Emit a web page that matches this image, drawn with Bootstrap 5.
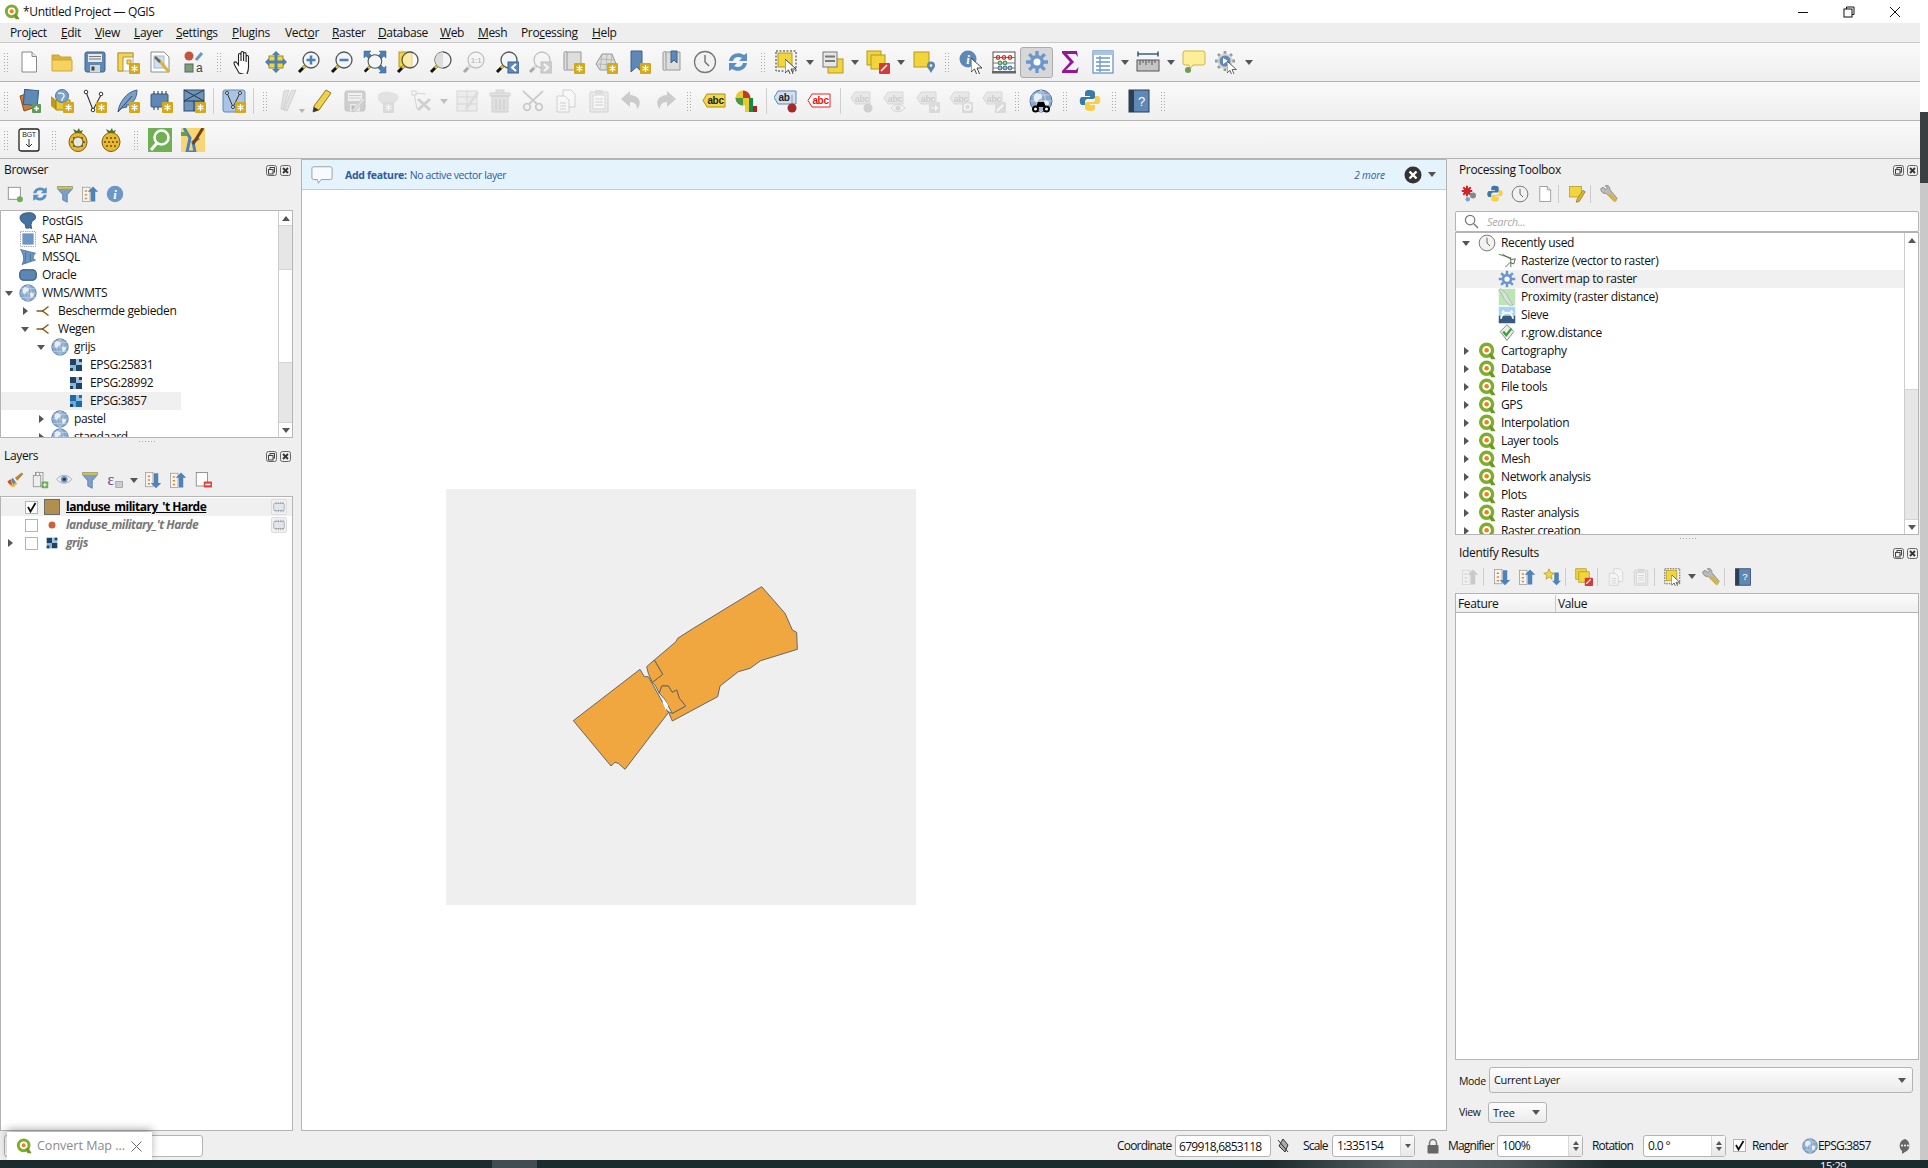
<!DOCTYPE html>
<html lang="en">
<head>
<meta charset="utf-8">
<title>QGIS</title>
<link href="https://cdn.jsdelivr.net/npm/bootstrap@5.3.0/dist/css/bootstrap.min.css" rel="stylesheet">
<style>
html,body{height:100%;margin:0;overflow:hidden}
body{width:1928px;height:1168px;background:#efefef;font-family:"Open Sans","Noto Sans",sans-serif;font-size:12px;line-height:18px;color:#111;letter-spacing:-.35px}
.appwin{height:1160px}
.mainw{width:1920px}
.edgebar{width:8px;background:#c9c9c9}
.edge-top{height:112px;background:#fff}
.edge-thumb{height:71px;background:#3b3f42}
.taskb{height:8px;background:#1c2b2e;color:#fff;font-size:11px;overflow:hidden}
.task-glow{width:45px;margin-left:492px;background:#414d52}
.task-grad{width:340px;margin-left:733px;background:linear-gradient(90deg,#1c2b2e,#5a6265 40%,#4b5558 70%,#1c2b2e)}
.task-time{margin-left:210px;margin-top:-1px;line-height:14px;width:60px}
.titlebar{height:23px;background:#fff;padding-left:4px;padding-right:2px}
.titlebar svg.ic{width:16px;height:16px;margin-right:3px}
.wctl{width:46px;height:23px}
.wctl svg{width:12px;height:12px}
.menubar{height:20px;background:#eee;border-bottom:1px solid #c9c9c9;padding-left:10px}
.menubar span{display:inline-block}
.menubar u{text-decoration:underline}
.mi1{width:51px}.mi2{width:34px}.mi3{width:39px}.mi4{width:42px}.mi5{width:56px}.mi6{width:53px}.mi7{width:47px}.mi8{width:46px}.mi9{width:62px}.mi10{width:38px}.mi11{width:43px}.mi12{width:71px}
.tb{height:39px;background:linear-gradient(#f9f9f9,#efefef);border-bottom:1px solid #b4b4b4}
.tb.tb3{height:38px}
.ti{width:33px;height:31px;flex:none;position:relative}
.ti svg{width:24px;height:24px}
.ti.on{background:#d7d7d7;border:1px solid #acacac;border-radius:3px}
.da{width:12.5px;height:31px;flex:none}
.tri{width:0;height:0;border-left:4px solid transparent;border-right:4px solid transparent;border-top:5px solid #555;flex:none}
.mini{position:absolute;right:1px;bottom:4px;border-left-width:3px;border-right-width:3px;border-top-width:4px;opacity:.4}
.gr{flex:none;width:16px;height:24px}
.gr.g0{width:12.5px}
.gr.nr{width:14px}
.gr::after{content:"";display:block;width:6px;height:20px;background-image:radial-gradient(#aaa .8px,transparent 1px);background-size:3px 3px}
.sp{flex:none;width:6.5px;height:26px}
.sp.wd{width:9.5px}
.sp::after{content:"";display:block;width:1px;height:100%;background:#cfcfcf}
.dis{opacity:.32;filter:grayscale(1)}
.body-row{height:972px}
.dockl{width:293px}
.gutter{width:8px;flex:none}
.mapcol{width:1146px;border:1px solid #b4b4b4;background:#fff}
.dockr{width:465px}
.docktitle{height:22px;padding-left:4px;padding-right:2px}
.dockbtns svg{width:11px;height:11px;margin-left:3px;display:block}
.pbar{height:29px;padding-left:2.5px;padding-bottom:3px}
.pbar2{height:28px;padding-bottom:3px}
.pi{width:25px;height:24px;flex:none}
.pi svg{width:18px;height:18px}
.pda{width:13px;height:24px;flex:none}
.ps{flex:none;width:7px;height:18px}
.ps::after{content:"";display:block;width:1px;height:100%;background:#ccc}
.treebox{background:#fff;border:1px solid #b4b4b4;overflow:hidden}
.tb-browser{height:228px}
.tb-layers{height:634px;padding-top:1px}
.tb-proc{height:303px}
.tlist{overflow:hidden;padding-top:1px}
.trow{height:18px;flex:none;white-space:nowrap}
.l0{padding-left:2px}.l1{padding-left:18px}.l2{padding-left:34px}.l3{padding-left:50px}
.arrw{width:12px;margin-right:4px;flex:none;display:flex;justify-content:center}
.ac{width:0;height:0;border-top:4px solid transparent;border-bottom:4px solid transparent;border-left:5px solid #555}
.ae{width:0;height:0;border-left:4px solid transparent;border-right:4px solid transparent;border-top:5px solid #555}
.ticon{width:18px;height:18px;margin-right:5px;flex:none}
.sel1{background:#f0f0f0;width:180px}
.sel2{background:#f0f0f0}
.tp .arrw{margin-right:6px}
.tp .p0{padding-left:4px}.tp .p1{padding-left:24px}
.tl .trow{padding-left:3px}
.tl .arrw{margin-right:9px}
.cbx{width:13px;height:13px;border:1px solid #b4b4b4;background:#fff;margin-right:6px;flex:none;display:flex}
.cbx svg{width:11px;height:11px}
.lic{width:16px;height:16px;margin-right:6px;flex:none}
.swatch{background:#b0904f;border:1px solid #6c6c6c}
.lyr-on{font-weight:700;text-decoration:underline;color:#000;letter-spacing:-.5px}
.lyr-off{font-weight:700;font-style:italic;color:#777;letter-spacing:-.5px}
.ind{width:16px;height:16px;margin-right:5px;background:#f1f1f1;border:1px solid #ddd;border-radius:2px}
.ind svg{width:14px;height:14px;display:block}
.sbar{width:14px;flex:none;border-left:1px solid #ccc;background:#fff}
.sbbtn{height:14px;flex:none}
.uptri{border-top:0;border-bottom:5px solid #555}
.sgrey{background:#e6e6e6;border-top:1px solid #d4d4d4;border-bottom:1px solid #d4d4d4}
.h45{height:45px}.h92{height:92px}.h142{height:142px}
.split{height:7px;flex:none}
.split::after{content:"";display:block;width:18px;height:3px;background-image:radial-gradient(#aaa .8px,transparent 1px);background-size:3px 3px}
.searchbox{height:21px;margin:1px 1px 0 0;border:1px solid #b4b4b4;border-radius:2px;background:#fff;padding-left:8px;font-style:italic;color:#aaa;font-size:11px}
.searchbox svg{width:15px;height:15px;margin-right:8px}
.tb-proc,.idtab{margin-right:1px}
.idtab{height:467px;background:#fff;border:1px solid #b4b4b4;margin-top:1px}
.idhead{height:19px;background:linear-gradient(#fbfbfb,#efefef);border-bottom:1px solid #b4b4b4;flex:none;padding-top:1px}
.idh1{width:100px;padding-left:2px;border-right:1px solid #c8c8c8;height:100%}
.idh2{padding-left:2px}
.formrow{padding-left:4px}
.fl{width:30px;flex:none;font-size:10.5px}
.combo{height:26px;border:1px solid #b4b4b4;border-radius:3px;background:linear-gradient(#fdfdfd,#ebebeb);padding:0 6px 0 4px;font-size:11px;flex:none}
.c-mode{width:424px;margin-top:7px}
.c-view{width:59px;height:21px;margin-top:9px;margin-left:-1px}
.statusb{height:29px;padding-top:4px;padding-right:7px;position:relative}
.loc{width:199px;height:22px;margin-left:4px;border:1px solid #b4b4b4;border-radius:3px;background:#fff}
.slb{line-height:22px;white-space:nowrap;letter-spacing:-.8px;flex:none}
.sinput{height:22px;padding:0 3px;font-size:12px;line-height:20px;border:1px solid #b4b4b4;border-radius:3px;box-shadow:none;background:#fff;letter-spacing:-.7px;color:#111;min-height:0;flex:none}
.w96{width:96px}
.sgroup{height:22px;border:1px solid #b4b4b4;border-radius:3px;background:#fff;flex:none;letter-spacing:-.6px}
.sgroup span.val{padding-left:4px}
.w83{width:83px}.w86{width:86px}
.scap{width:14px;height:100%;border-left:1px solid #d8d8d8;background:linear-gradient(#fafafa,#e8e8e8);flex:none}
.scap .tri{border-top-width:4px;border-left-width:3px;border-right-width:3px}
.scap .uptri{border-top:0;border-bottom:4px solid #555;margin-bottom:2px}
.st-ico{width:16px;height:16px;flex:none;margin-top:3px}
.lab-coord{width:54px;margin-left:auto}
.lab-scale{width:25px;margin-left:12px}
.lab-mag{width:45px;margin-left:8px}
.lab-rot{width:42px;margin-left:9px}
.lab-ren{width:35px}
.lab-eps{width:57px}
.g4{margin-left:4px}.g9{margin-left:9px}.g7{margin-left:7px}.g11{margin-left:11px}.g15{margin-left:15px}.g22{margin-left:22px}
.cbx.st{margin-top:4px}
.lock{width:14px}
.popup{position:absolute;left:7px;top:1px;width:145px;height:28px;background:#fff;box-shadow:0 -3px 8px rgba(0,0,0,.3);color:#8a8a8a;padding-left:9px;font-size:12.5px;letter-spacing:0}
.popup svg.q{width:16px;height:16px;margin-right:5px}
.popup svg.x{width:11px;height:11px;margin-left:auto;margin-right:10px}
.msgbar{height:30px;background:#e5f3fc;border-bottom:1px solid #b9d0e6;padding-left:9px;padding-right:10px;font-size:10.5px;color:#2d5aa5;flex:none;letter-spacing:-.4px}
.msgbar svg.bub{width:22px;height:22px;margin-right:12px}
.msgbar b{margin-right:3px;letter-spacing:-.3px}
.msgmore{font-style:italic;margin-left:auto;margin-right:19px;font-size:10px;letter-spacing:-.1px}
.msgx{width:18px;height:18px;margin-right:6px}
.canvas{position:relative;flex:1}
.maprect{position:absolute;left:144px;top:299px;width:470px;height:416px;background:#efefef}
.mapshape{position:absolute;left:94px;top:81px;width:280px;height:210px}
svg{overflow:visible}
</style>
</head>
<body class="d-flex flex-column">
<svg width="0" height="0" class="position-absolute">
<defs>
<symbol id="q" viewBox="0 0 24 24"><circle cx="11.5" cy="11" r="8" fill="#fff" stroke="#7fae2f" stroke-width="4.5"/><path d="M14 16l4.500-1 5 8h-6z" fill="#6b9a22"/><circle cx="11.500" cy="11" r="3" fill="#ee7f1c"/></symbol>
<symbol id="bdg" viewBox="0 0 24 24"><rect x="13" y="13" width="11" height="11" rx="1" fill="#d3a91b"/><path d="M18.500 15v7M15.500 16.700l6 3.600M21.500 16.700l-6 3.600" stroke="#fff" stroke-width="1.300"/></symbol>
<symbol id="doc" viewBox="0 0 24 24"><path d="M5 2h10l4.500 4.500V22H5z" fill="#fff" stroke="#888"/><path d="M15 2v4.500h4.500" fill="#eee" stroke="#888"/></symbol>
<symbol id="folder" viewBox="0 0 24 24"><path d="M2 5h7l2 2h10v3H2z" fill="#d9b43c" stroke="#c9a537"/><path d="M2 21V10h20v11z" fill="#f6d260" stroke="#cfa93b"/></symbol>
<symbol id="floppy" viewBox="0 0 24 24"><rect x="2" y="2" width="20" height="20" rx="2" fill="#5e88b5" stroke="#3d6289"/><rect x="5" y="4" width="14" height="8" fill="#e9e9e9"/><path d="M6 6.500h12M6 9h12" stroke="#777"/><rect x="7" y="15" width="10" height="7" fill="#d8d8d8"/><rect x="8.500" y="16.500" width="3" height="4" fill="#444"/></symbol>
<symbol id="layout" viewBox="0 0 24 24"><rect x="2" y="3" width="15" height="18" fill="#fff" stroke="#aaa"/><path d="M2 3h15v4H7v14H2z" fill="#f4d35b" stroke="#b8962b"/><path d="M11 10h4v4h-4z" fill="#f4d35b" stroke="#b8962b"/><use href="#bdg"/></symbol>
<symbol id="styled" viewBox="0 0 24 24"><path d="M2 2h13l5 5v15H2z" fill="#fff" stroke="#8c8c8c"/><rect x="5" y="6" width="10" height="12" fill="#cfe0f3" stroke="#9bb9da"/><path d="M9 9l11 13" stroke="#d9b43c" stroke-width="3"/><path d="M6 7l5 5" stroke="#666" stroke-width="2.500"/></symbol>
<symbol id="stylem" viewBox="0 0 24 24"><circle cx="7" cy="6" r="4.500" fill="#c2553d"/><path d="M14 10l6-7" stroke="#6a97c4" stroke-width="3"/><rect x="3" y="14" width="8" height="8" fill="#7e9f73" stroke="#567"/><text x="14" y="22" font-size="12" fill="#444" font-family="Liberation Sans">a</text></symbol>
<symbol id="hand" viewBox="0 0 24 24"><path d="M8 23C6 19 3 15 3 13c0-1.500 2-1.500 3 0l1.500 2V5c0-2 2.500-2 2.500 0v6-8c0-2 2.600-2 2.600 0v8-7c0-2 2.500-2 2.500 0v8-5c0-2 2.400-2 2.400 0v10c0 4-1 6-2 8z" fill="#fff" stroke="#222" stroke-width="1.100"/></symbol>
<symbol id="pansel" viewBox="0 0 24 24"><rect x="5" y="6" width="14" height="12" fill="#f2d53c" stroke="#9d8b1d"/><path d="M12 1l4 4h-2.500v14H16l-4 4-4-4h2.500V5H8zM1 12l4-4v2.500h14V8l4 4-4 4v-2.500H5V16z" fill="#4b7fb5"/></symbol>
<symbol id="mag" viewBox="0 0 24 24"><path d="M9 15L2 22" stroke="#111" stroke-width="3"/><path d="M6 18l3-3" stroke="#e2c132" stroke-width="3"/><circle cx="14" cy="10" r="8" fill="#f3f6f8" stroke="#555" stroke-width="1.300"/></symbol>
<symbol id="zin" viewBox="0 0 24 24"><use href="#mag"/><path d="M14 5.500v9M9.500 10h9" stroke="#4b7fb5" stroke-width="2.500"/></symbol>
<symbol id="zout" viewBox="0 0 24 24"><use href="#mag"/><path d="M9.500 10h9" stroke="#4b7fb5" stroke-width="2.500"/></symbol>
<symbol id="zfull" viewBox="0 0 24 24"><path d="M1 1h7L6 3l4 4-3 3-4-4-2 2zM23 1v7l-2-2-4 4-3-3 4-4-2-2zM23 23h-7l2-2-4-4 3-3 4 4 2-2z" fill="#4b7fb5" stroke="#2f5f8f" stroke-width=".5"/><use href="#mag" transform="translate(0 3) scale(.85)"/></symbol>
<symbol id="zsel" viewBox="0 0 24 24"><rect x="3" y="2" width="13" height="15" fill="#f2d53c" stroke="#b29a1f"/><path d="M9 15L2 22" stroke="#111" stroke-width="3"/><path d="M6 18l3-3" stroke="#e2c132" stroke-width="3"/><circle cx="14" cy="10" r="8" fill="#fff" fill-opacity=".55" stroke="#555" stroke-width="1.300"/></symbol>
<symbol id="zlay" viewBox="0 0 24 24"><use href="#mag"/><path d="M14 2a8 8 0 0 0 0 16z" fill="#ddd"/></symbol>
<symbol id="z11" viewBox="0 0 24 24"><use href="#mag"/><text x="14" y="13" font-size="8" text-anchor="middle" font-weight="700" fill="#555" font-family="Liberation Sans">1:1</text></symbol>
<symbol id="zlast" viewBox="0 0 24 24"><use href="#mag"/><rect x="13" y="12" width="11" height="11" fill="#5e88b5" stroke="#3d6289"/><path d="M21 14l-4 3.500 4 3.500" fill="none" stroke="#fff" stroke-width="2"/></symbol>
<symbol id="znext" viewBox="0 0 24 24"><use href="#mag"/><rect x="13" y="12" width="11" height="11" fill="#5e88b5" stroke="#3d6289"/><path d="M16 14l4 3.500-4 3.500" fill="none" stroke="#fff" stroke-width="2"/></symbol>
<symbol id="roll" viewBox="0 0 24 24"><path d="M3 3c0-2 3-2 3 0v16c0 2-3 2-3 0zM5 2h15v18H6" fill="#ddd" stroke="#999"/></symbol>
<symbol id="nmap" viewBox="0 0 24 24"><use href="#roll"/><use href="#bdg"/></symbol>
<symbol id="map3d" viewBox="0 0 24 24"><path d="M2 14L8 4h10l4 10-6 6H6z" fill="#ddd" stroke="#999"/><path d="M5 9l15 1M3 14l17 1M8 4l-2 16M13 4l-1 16M18 4l-2 16" stroke="#aaa" stroke-width=".7"/><use href="#bdg"/></symbol>
<symbol id="bm" viewBox="0 0 24 24"><path d="M4 1h11v21l-5.500-5-5.500 5z" fill="#5e88b5" stroke="#3d6289"/><use href="#bdg"/></symbol>
<symbol id="bms" viewBox="0 0 24 24"><use href="#roll"/><path d="M11 1h6v12l-3-3-3 3z" fill="#5e88b5" stroke="#3d6289"/></symbol>
<symbol id="clock" viewBox="0 0 24 24"><circle cx="12" cy="12" r="10.500" fill="#f2f2f2" stroke="#777" stroke-width="1.300"/><path d="M12 5v7l4 4" fill="none" stroke="#666" stroke-width="1.300"/></symbol>
<symbol id="refr" viewBox="0 0 24 24"><path d="M3 11C4 4 12 1 18 5l3-2v8h-8l3-3c-4-2-8-1-9 3z" fill="#5a8fc4"/><path d="M21 13c-1 7-9 10-15 6l-3 2v-8h8l-3 3c4 2 8 1 9-3z" fill="#5a8fc4"/></symbol>
<symbol id="cur" viewBox="0 0 24 24"><path d="M0 0l0 14 3.500-3 2.500 6 2.500-1-2.500-6h5z" fill="#fff" stroke="#333" stroke-width=".9"/></symbol>
<symbol id="selr" viewBox="0 0 24 24"><rect x="1" y="1" width="20" height="20" fill="none" stroke="#333" stroke-dasharray="2 1.500"/><rect x="3" y="3" width="14" height="14" fill="#f2d53c" stroke="#b29a1f"/><use href="#cur" transform="translate(10 9)"/></symbol>
<symbol id="selt" viewBox="0 0 24 24"><rect x="7" y="9" width="15" height="14" fill="#f2d53c" stroke="#b29a1f"/><rect x="2" y="2" width="14" height="15" fill="#e7e7e7" stroke="#777"/><path d="M4 6.500h10M4 11h10" stroke="#777" stroke-width="2"/></symbol>
<symbol id="dsel" viewBox="0 0 24 24"><rect x="1" y="1" width="14" height="14" fill="#f2d53c" stroke="#b29a1f"/><rect x="5" y="5" width="14" height="14" fill="#f2d53c" stroke="#b29a1f"/><rect x="13" y="13" width="11" height="11" rx="1" fill="#d53a3a"/><path d="M15 21l6-6" stroke="#fff" stroke-width="1.500"/></symbol>
<symbol id="selloc" viewBox="0 0 24 24"><rect x="2" y="2" width="15" height="15" fill="#f2d53c" stroke="#b29a1f"/><path d="M19 23c-2-4-4-5-4-7.500a4 4 0 0 1 8 0C23 18 21 19 19 23z" fill="#5f86a8"/><circle cx="19" cy="15.500" r="1.300" fill="#fff"/></symbol>
<symbol id="ident" viewBox="0 0 24 24"><circle cx="9" cy="9" r="8.500" fill="#5e88b5"/><text x="9" y="14" font-size="13" text-anchor="middle" font-style="italic" font-weight="700" fill="#fff" font-family="Liberation Serif">i</text><use href="#cur" transform="translate(12 8)"/></symbol>
<symbol id="abac" viewBox="0 0 24 24"><rect x="1" y="2" width="22" height="20" fill="#fff" stroke="#555"/><path d="M1 7.500h22M1 13h22M1 18h22" stroke="#777"/><g fill="none" stroke-width="1.300"><circle cx="6" cy="7.500" r="1.800" stroke="#c0392b"/><circle cx="12" cy="7.500" r="1.800" stroke="#c0392b"/><circle cx="18" cy="7.500" r="1.800" stroke="#c0392b"/><circle cx="8" cy="13" r="1.800" stroke="#4b9b5a"/><circle cx="13" cy="13" r="1.800" stroke="#4b9b5a"/><circle cx="8" cy="18" r="1.800" stroke="#4b7fb5"/><circle cx="13" cy="18" r="1.800" stroke="#4b7fb5"/><circle cx="18" cy="18" r="1.800" stroke="#4b7fb5"/></g><rect y="21" width="24" height="2.500" fill="#666"/></symbol>
<symbol id="gear" viewBox="0 0 24 24"><g stroke="#6b97cc" stroke-width="3.300"><path d="M12 1v22M1 12h22M4.200 4.200l15.600 15.600M19.800 4.200L4.200 19.800"/></g><circle cx="12" cy="12" r="7" fill="#6b97cc"/><circle cx="12" cy="12" r="3.500" fill="#fff"/></symbol>
<symbol id="sigma" viewBox="0 0 24 24"><path d="M4 1h15l1 6-2.500-3H9l7 8-8 8h10l2.500-3-1 6H4v-2l8-9-8-9z" fill="#96169a"/></symbol>
<symbol id="table" viewBox="0 0 24 24"><rect x="2" y="1" width="20" height="22" fill="#fff" stroke="#6b97cc" stroke-width="1.300"/><rect x="2" y="1" width="20" height="4" fill="#a9c4e4"/><path d="M5 8h14M5 12h14M5 16h14M5 20h14M9 6v16" stroke="#6b97cc" stroke-width="1.300"/></symbol>
<symbol id="ruler" viewBox="0 0 24 24"><path d="M2 4h20M2 1.500v5M22 1.500v5" stroke="#3d5f82" stroke-width="1.600"/><rect x="1" y="10" width="22" height="11" fill="#c5c5c5" stroke="#555"/><path d="M4 10v5M7 10v3M10 10v5M13 10v3M16 10v5M19 10v3" stroke="#555"/></symbol>
<symbol id="balloon" viewBox="0 0 24 24"><path d="M3 1h18a2 2 0 0 1 2 2v10a2 2 0 0 1-2 2H11l-3 4-1-4H3a2 2 0 0 1-2-2V3a2 2 0 0 1 2-2z" fill="#fcef9a" stroke="#d1b33f"/><circle cx="6" cy="20" r="3" fill="#6e9a58"/></symbol>
<symbol id="runq" viewBox="0 0 24 24"><g stroke="#9a9a9a" stroke-width="2.800"><path d="M10 1v20M0 11h20M3 4l14 14M17 4L3 18"/></g><circle cx="10" cy="11" r="7.500" fill="#d3d3d3"/><circle cx="10" cy="11" r="5.500" fill="#5e88b5"/><path d="M8 8l5 3-5 3z" fill="#fff"/><use href="#cur" transform="translate(12 11) scale(.85)"/></symbol>
<symbol id="dsm" viewBox="0 0 24 24"><path d="M3 7l12-4 4 15-12 4z" fill="#cc7b38" stroke="#8d4c1b"/><rect x="7" y="1" width="14" height="15" fill="#5e88b5" stroke="#345a82" transform="rotate(5 14 8)"/><rect x="15" y="15" width="9" height="9" rx="1" fill="#5f9a58"/><path d="M19.500 17v5M17 19.500h5" stroke="#fff" stroke-width="1.500"/></symbol>
<symbol id="gpkg" viewBox="0 0 24 24"><path d="M1 7l5 4v10l-5-4z" fill="#bb9a1d"/><path d="M6 11h14v10H6z" fill="#e6c72d" stroke="#9d841a"/><circle cx="12" cy="7" r="6.500" fill="#7aa1c9" stroke="#4f7aa6"/><path d="M8 4c3 1 5-1 6 2s-3 3-2 6" stroke="#e7eef6" fill="none" stroke-width="1.500"/><use href="#bdg"/></symbol>
<symbol id="nshp" viewBox="0 0 24 24"><path d="M3 3l7 18 8-15" fill="none" stroke="#333" stroke-width="1.100"/><circle cx="3" cy="3" r="1.800" fill="#fff" stroke="#333"/><circle cx="18" cy="5" r="1.800" fill="#fff" stroke="#333"/><circle cx="10" cy="21" r="1.800" fill="#fff" stroke="#333"/><use href="#bdg"/></symbol>
<symbol id="feather" viewBox="0 0 24 24"><path d="M2 23C3 14 10 3 21 1c0 8-4 13-8 15l-3 0 1 2-5 1z" fill="#7b9fc8" stroke="#3d6289"/><path d="M2 23L16 7" stroke="#2f4d6d"/><use href="#bdg"/></symbol>
<symbol id="mem" viewBox="0 0 24 24"><rect x="2" y="5" width="17" height="13" rx="1" fill="#5e88b5" stroke="#345a82"/><path d="M5 2v3M9 2v3M13 2v3M17 2v3M5 18v3M9 18v3" stroke="#333"/><use href="#bdg"/></symbol>
<symbol id="vlay" viewBox="0 0 24 24"><rect x="2" y="1" width="20" height="21" fill="#6e94bb" stroke="#2f4d6d"/><path d="M2 12h20M12 12v10M2 1l20 11M22 1L2 12" stroke="#22384f"/><use href="#bdg"/></symbol>
<symbol id="vbox" viewBox="0 0 24 24"><rect x="1" y="1" width="22" height="22" rx="2" fill="#a9c4e4" stroke="#5e88b5"/><path d="M5 4l6 14 7-14" fill="none" stroke="#333"/><circle cx="5" cy="4" r="1.500" fill="#fff" stroke="#333"/><circle cx="18" cy="4" r="1.500" fill="#fff" stroke="#333"/><circle cx="11" cy="18" r="1.500" fill="#fff" stroke="#333"/><use href="#bdg"/></symbol>
<symbol id="pens" viewBox="0 0 24 24"><path d="M7 2l5-1-6 20-2-1zM14 2l5-1-9 21-3-1z" fill="#bbb" stroke="#888"/></symbol>
<symbol id="pen" viewBox="0 0 24 24"><path d="M16 1l5 3L9 21l-6 2 1-6z" fill="#f0d24a" stroke="#8d7a1f"/><path d="M9 21l-5-3-1 5z" fill="#333"/></symbol>
<symbol id="saveed" viewBox="0 0 24 24"><use href="#floppy"/><path d="M22 11L12 22l-3 1 1-3 10-11z" fill="#bbb" stroke="#777"/></symbol>
<symbol id="addp" viewBox="0 0 24 24"><path d="M2 6c5-5 14-4 20 0 2 6-3 6-5 10H8C4 14 1 11 2 6z" fill="#bbb"/><use href="#bdg" transform="translate(-6 0)"/></symbol>
<symbol id="digi" viewBox="0 0 24 24"><path d="M5 4l12 1M5 4l3 16" stroke="#888" fill="none"/><rect x="3" y="2" width="4" height="4" fill="#fff" stroke="#888"/><path d="M9 10l12 11M21 10L9 21" stroke="#888" stroke-width="3"/></symbol>
<symbol id="edtb" viewBox="0 0 24 24"><rect x="2" y="2" width="20" height="20" fill="#ddd" stroke="#999"/><path d="M2 8h20M2 15h20M12 2v20" stroke="#999"/><path d="M22 2L12 16l-2 4 4-2L24 4z" fill="#aaa"/></symbol>
<symbol id="trash" viewBox="0 0 24 24"><path d="M2 4h20v3H2zM8 4V1h8v3M4 7h16v16H4z" fill="#bbb" stroke="#888"/><path d="M8 10v11M12 10v11M16 10v11" stroke="#777"/></symbol>
<symbol id="sciss" viewBox="0 0 24 24"><path d="M2 2l14 13M22 2L8 15" stroke="#777" stroke-width="1.800"/><circle cx="6" cy="18" r="3.300" fill="none" stroke="#777" stroke-width="1.800"/><circle cx="18" cy="18" r="3.300" fill="none" stroke="#777" stroke-width="1.800"/></symbol>
<symbol id="copy" viewBox="0 0 24 24"><path d="M9 1h8l4 4v13H9z" fill="#fff" stroke="#888"/><path d="M3 7h8l4 4v12H3z" fill="#fff" stroke="#888"/><path d="M6 14h6M6 17h6M6 20h6" stroke="#888"/></symbol>
<symbol id="paste" viewBox="0 0 24 24"><rect x="3" y="3" width="18" height="20" rx="1" fill="#ddd" stroke="#888"/><rect x="6" y="6" width="12" height="14" fill="#fff" stroke="#999"/><rect x="8" y="1" width="8" height="4" fill="#aaa"/><path d="M8 10h8M8 13h8M8 16h8" stroke="#888"/></symbol>
<symbol id="undo" viewBox="0 0 24 24"><path d="M10 2L1 10l9 8v-5c5 0 7 3 7 7 4-4 5-13-7-14z" fill="#777"/></symbol>
<symbol id="redo" viewBox="0 0 24 24"><path d="M14 2l9 8-9 8v-5c-5 0-7 3-7 7-4-4-5-13 7-14z" fill="#777"/></symbol>
<symbol id="lab" viewBox="0 0 24 24"><path d="M5 5h18v13H5L1 11.500z" fill="#f4d84a" stroke="#a98f1b"/><text x="13.500" y="15" font-size="10" text-anchor="middle" font-weight="700" fill="#222" font-family="Liberation Sans">abc</text></symbol>
<symbol id="pie" viewBox="0 0 24 24"><circle cx="8" cy="9" r="7.500" fill="#e9c92f"/><path d="M8 9V1.500A7.500 7.500 0 0 1 15.500 9z" fill="#c0392b"/><path d="M8 9v7.500A7.500 7.500 0 0 1 .5 9z" fill="#4a9a44"/><rect x="10" y="14" width="4" height="9" fill="#e9c92f"/><rect x="14" y="9" width="4" height="14" fill="#118a4a"/><rect x="18" y="17" width="4" height="6" fill="#b3211b"/></symbol>
<symbol id="labpin" viewBox="0 0 24 24"><path d="M4 2h18v13H4L0 8.500z" fill="#cfe0f3" stroke="#5e88b5"/><text x="10" y="12" font-size="10" font-weight="700" text-anchor="middle" fill="#222" font-family="Liberation Sans">ab</text><path d="M18 6v10" stroke="#999"/><circle cx="18" cy="19" r="4.500" fill="#a62a2a"/></symbol>
<symbol id="labred" viewBox="0 0 24 24"><path d="M5 5h18v13H5L1 11.500z" fill="#fff" stroke="#e22"/><text x="13.500" y="15" font-size="10" font-weight="700" text-anchor="middle" fill="#e11" font-family="Liberation Sans">abc</text></symbol>
<symbol id="labg" viewBox="0 0 24 24"><path d="M5 3h15v12H5L1 9z" fill="#ccc" stroke="#999"/><text x="12" y="12.500" font-size="9" font-weight="700" text-anchor="middle" fill="#777" font-family="Liberation Sans">abc</text></symbol>
<symbol id="lab1" viewBox="0 0 24 24"><use href="#labg"/><circle cx="18" cy="19" r="4.500" fill="#888"/></symbol>
<symbol id="lab2" viewBox="0 0 24 24"><use href="#labg"/><path d="M8 19c4-5 10-5 14 0-4 5-10 5-14 0z" fill="#eee" stroke="#999"/><circle cx="15" cy="19" r="2.500" fill="#999"/></symbol>
<symbol id="lab3" viewBox="0 0 24 24"><use href="#labg"/><rect x="13" y="13" width="11" height="11" rx="1" fill="#aaa"/><path d="M15 18.500h4v-2.500l3.500 3-3.500 3v-2.500h-4z" fill="#fff"/></symbol>
<symbol id="lab4" viewBox="0 0 24 24"><use href="#labg"/><rect x="13" y="13" width="11" height="11" rx="1" fill="#aaa"/><circle cx="18.500" cy="18" r="3" fill="none" stroke="#fff" stroke-width="1.500"/></symbol>
<symbol id="lab5" viewBox="0 0 24 24"><use href="#labg"/><rect x="13" y="13" width="11" height="11" rx="1" fill="#aaa"/><path d="M15 22l6-6" stroke="#fff" stroke-width="2"/></symbol>
<symbol id="globe" viewBox="0 0 24 24"><circle cx="12" cy="12" r="11" fill="#8aa9cb" stroke="#4e779f"/><path d="M12 1v22M1 12h22M3 6h18M3 18h18" stroke="#c7d7e8" stroke-width=".8"/><path d="M12 1c-6 6-6 16 0 22M12 1c6 6 6 16 0 22" fill="none" stroke="#c7d7e8" stroke-width=".8"/><path d="M7 4c3 1 5 0 6 3s-3 3-4 5-3 1-4-1 0-5 2-7zM15 12c3-1 5 0 5 2s-3 5-4 4-2-4-1-6z" fill="#e8eef5"/></symbol>
<symbol id="gbin" viewBox="0 0 24 24"><use href="#globe"/><circle cx="6.500" cy="20" r="3.500" fill="#000"/><circle cx="17.500" cy="20" r="3.500" fill="#000"/><circle cx="6.500" cy="20" r="1.500" fill="#fff"/><circle cx="17.500" cy="20" r="1.500" fill="#fff"/><path d="M9 13h6l2 5H7z" fill="#000"/></symbol>
<symbol id="py" viewBox="0 0 24 24"><path d="M11.500 1C7 1 7 3 7 5v2h5v1H4c-3 0-3 8 0 8h3v-3c0-2 1-3 3-3h5c1.500 0 2-.8 2-2V4c0-2-2-3-5.500-3z" fill="#3c78a8"/><path d="M12.500 22c4.500 0 4.500-2 4.500-4v-2h-5v-1h8c3 0 3-8 0-8h-3v3c0 2-1 3-3 3h-5c-1.500 0-2 .8-2 2v4c0 2 2 3 5.500 3z" fill="#f7d04a"/></symbol>
<symbol id="help" viewBox="0 0 24 24"><rect x="2" y="1" width="20" height="22" fill="#5e88b5" stroke="#2d3f52"/><rect x="2" y="1" width="5" height="22" fill="#2d3f52"/><text x="14.500" y="16.500" font-size="13" text-anchor="middle" fill="#fff" font-family="Liberation Sans">?</text></symbol>
<symbol id="bgt" viewBox="0 0 24 24"><rect x="2" y="1" width="20" height="22" rx="2" fill="#fff" stroke="#222" stroke-width="1.300"/><text x="12" y="9" font-size="7" text-anchor="middle" fill="#222" font-family="Liberation Sans">BGT</text><path d="M12 11v8M9 16l3 3 3-3" fill="none" stroke="#333"/></symbol>
<symbol id="pine" viewBox="0 0 24 24"><path d="M9 5l-2-4 4 2 2-3 1 3 3-1-2 4z" fill="#3d7a20"/><ellipse cx="12" cy="14" rx="9" ry="9.500" fill="#e8b92b" stroke="#7a5b16"/><g fill="#6a4a12"><circle cx="8" cy="10" r="1"/><circle cx="12" cy="10" r="1"/><circle cx="16" cy="10" r="1"/><circle cx="6" cy="14" r="1"/><circle cx="10" cy="14" r="1"/><circle cx="14" cy="14" r="1"/><circle cx="18" cy="14" r="1"/><circle cx="8" cy="18" r="1"/><circle cx="12" cy="18" r="1"/><circle cx="16" cy="18" r="1"/></g></symbol>
<symbol id="pinel" viewBox="0 0 24 24"><use href="#pine"/><circle cx="12" cy="14" r="5" fill="#e8e8d8" stroke="#555"/></symbol>
<symbol id="gsearch" viewBox="0 0 24 24"><rect width="24" height="24" fill="#6fb052"/><circle cx="13.500" cy="9.500" r="7" fill="none" stroke="#fff" stroke-width="2.600"/><path d="M9 15l-6 7" stroke="#fff" stroke-width="3"/></symbol>
<symbol id="mapb" viewBox="0 0 24 24"><rect width="24" height="24" fill="#f7d774"/><path d="M3 0l6 10-3 14h8l-2-10 6-4" fill="none" stroke="#4a7fc2" stroke-width="3"/><path d="M0 4h6v4H0z" fill="#5fa24a"/><path d="M22 0L12 16" stroke="#7a3d17" stroke-width="3"/></symbol>
<symbol id="nrect" viewBox="0 0 24 24"><rect x="3" y="3" width="16" height="16" fill="#fff" stroke="#777" stroke-dasharray="0"/><circle cx="18.500" cy="19" r="4" fill="#6fae5a"/></symbol>
<symbol id="filt" viewBox="0 0 24 24"><path d="M2 2h20v3l-7 8v10l-6-3v-7L2 5z" fill="#7b9fc8" stroke="#4f7aa6"/><rect x="2" y="2" width="20" height="3" fill="#e2c132"/></symbol>
<symbol id="coll" viewBox="0 0 24 24"><rect x="2" y="3" width="10" height="19" fill="#f4f4f4" stroke="#999"/><path d="M5 8h3M5 13h3M5 18h3" stroke="#e68a24" stroke-width="2"/><path d="M16 2l7 7h-4v13h-6V9H9z" fill="#4f82b8"/></symbol>
<symbol id="expd" viewBox="0 0 24 24"><rect x="2" y="2" width="10" height="19" fill="#f4f4f4" stroke="#999"/><path d="M5 7h3M5 12h3M5 17h3" stroke="#e68a24" stroke-width="2"/><path d="M16 23l7-7h-4V3h-6v13H9z" fill="#4f82b8"/></symbol>
<symbol id="exps" viewBox="0 0 24 24"><path d="M8 1l2 5 5 1-4 3 1 5-4-3-4 3 1-5-4-3 5-1z" fill="#f2d53c" stroke="#b29a1f"/><path d="M15 6h6v11h3l-6 6-6-6h3z" fill="#4f82b8"/></symbol>
<symbol id="info" viewBox="0 0 24 24"><circle cx="12" cy="12" r="11" fill="#6d97c6"/><text x="12" y="18" font-size="17" font-style="italic" font-weight="700" text-anchor="middle" fill="#fff" font-family="Liberation Serif">i</text></symbol>
<symbol id="brush" viewBox="0 0 24 24"><path d="M2 14l7-5 6 8-5 5c-3-1-7-4-8-8z" fill="#e9b945"/><path d="M2 14l4-3 2 8c-3-1-5-3-6-5z" fill="#d0463a"/><path d="M7 13l2-4 4 6-3 3z" fill="#5e88b5"/><path d="M12 9l9-7 2 2-8 9z" fill="#b78339"/></symbol>
<symbol id="addg" viewBox="0 0 24 24"><rect x="6" y="2" width="10" height="18" fill="#eee" stroke="#888"/><rect x="3" y="6" width="10" height="15" fill="#eee" stroke="#888"/><circle cx="9" cy="4" r="2.500" fill="#fff" stroke="#888"/><rect x="14" y="14" width="9" height="9" rx="1" fill="#6fae5a"/><path d="M18.500 16v5M16 18.500h5" stroke="#fff" stroke-width="1.300"/></symbol>
<symbol id="eye" viewBox="0 0 24 24"><path d="M1 11c5-7 15-7 20 0-5 7-15 7-20 0z" fill="#eee" stroke="#999"/><circle cx="11" cy="11" r="4.500" fill="#6d97c6"/><circle cx="11" cy="11" r="2" fill="#234"/></symbol>
<symbol id="eps" viewBox="0 0 24 24"><text x="2" y="18" font-size="21" fill="#6c3a85" font-family="Liberation Serif">&#949;</text><rect x="13" y="14" width="9" height="8" fill="#ccc" stroke="#999"/></symbol>
<symbol id="rml" viewBox="0 0 24 24"><rect x="3" y="2" width="15" height="18" fill="#fff" stroke="#777"/><rect x="13" y="14" width="11" height="8" rx="1" fill="#e0433b"/><path d="M15 18h7" stroke="#fff" stroke-width="2"/></symbol>
<symbol id="pg" viewBox="0 0 24 24"><path d="M12 1c7-1 11 3 10 7-1 3-3 4-4 3l-2 6 1 5-3-1c-2 1-4 1-5 0l-1-5C3 14 0 9 2 5c2-3 6-4 10-4z" fill="#45729e" stroke="#24486e"/></symbol>
<symbol id="hana" viewBox="0 0 24 24"><rect x="2" y="2" width="20" height="20" fill="#fff" stroke="#777" stroke-dasharray="1.500 1.500"/><rect x="4.500" y="4.500" width="15" height="15" fill="#6c97c4"/></symbol>
<symbol id="mss" viewBox="0 0 24 24"><path d="M2 2l20 5c-4 3-4 8 0 9L4 22c4-6 2-14-2-20z" fill="#6c97c4" stroke="#3c6792"/><path d="M9 6l-1 14M15 8v10" stroke="#3c6792"/></symbol>
<symbol id="ora" viewBox="0 0 24 24"><rect x="1" y="5" width="22" height="14" rx="5" fill="#5d86b3" stroke="#2e4f73" stroke-width="1.400"/></symbol>
<symbol id="wms" viewBox="0 0 24 24"><path d="M2 12h8l8-6M10 12l8 6" fill="none" stroke="#8b5a10" stroke-width="2"/><circle cx="10" cy="12" r="1.500" fill="#8b5a10"/></symbol>
<symbol id="rast" viewBox="0 0 24 24"><path d="M4 4h8v8H4zM12 12h8v8h-8z" fill="#1d4466"/><path d="M12 4h8v8h-8z" fill="#a5c3de"/><path d="M4 12h8v8H4z" fill="#8fb5d8"/><path d="M16 4h4v4h-4z" fill="#1d4466"/><path d="M4 16h4v4H4z" fill="#1d4466"/></symbol>
<symbol id="rast2" viewBox="0 0 24 24"><path d="M4 4h8v8H4zM12 12h8v8h-8z" fill="#1d6aa8"/><path d="M12 4h8v8h-8z" fill="#8fc1e8"/><path d="M4 12h8v8H4z" fill="#6aa9dd"/><path d="M16 4h4v4h-4z" fill="#1d6aa8"/><path d="M4 16h4v4H4z" fill="#1d4466"/></symbol>
<symbol id="chip" viewBox="0 0 24 24"><rect x="3" y="6" width="18" height="12" rx="1" fill="#dfe6ee" stroke="#8a8f96"/><path d="M7 3v3M11 3v3M15 3v3M19 3v3M7 18v3M11 18v3M15 18v3M19 18v3" stroke="#777"/></symbol>
<symbol id="rgears" viewBox="0 0 24 24"><g stroke="#d3232a" stroke-width="2.600"><path d="M8 1v14M1 8h14M3 3l10 10M13 3L3 13"/></g><circle cx="8" cy="8" r="4.500" fill="#d3232a"/><circle cx="16" cy="14" r="4" fill="#888"/><circle cx="9" cy="19" r="3" fill="#7ba0cd"/></symbol>
<symbol id="wrench" viewBox="0 0 24 24"><path d="M1 5l3-2 4 3 2-2L7 1c3-1 7 1 6 5l10 12-4 4L8 11c-4 1-7-2-7-6z" fill="#bbb" stroke="#777"/><path d="M13 10l10 10-3 3-10-10z" fill="#d9b43c"/></symbol>
<symbol id="penY" viewBox="0 0 24 24"><rect x="2" y="2" width="16" height="14" fill="#f2d53c" stroke="#b29a1f"/><path d="M20 7l3 2-8 13-4 1 1-4z" fill="#d5b73c" stroke="#8d7a1f"/></symbol>
<symbol id="rzr" viewBox="0 0 24 24"><path d="M1 3l16 5v12" stroke="#6e9a58" stroke-width="1.600" fill="none"/><path d="M6 3l12 7 5-1-2 7-5-2-6 6" fill="none" stroke="#555" stroke-width="1.200"/></symbol>
<symbol id="prox" viewBox="0 0 24 24"><rect x="1" y="1" width="22" height="22" fill="#bfe3b8"/><path d="M4 1c2 4 8 5 9 10s5 8 7 12h-5c-3-5-6-6-8-11S3 5 1 3z" fill="#dfdfdf" stroke="#8bbd85"/></symbol>
<symbol id="sieve" viewBox="0 0 24 24"><rect x="1" y="1" width="22" height="12" fill="#a6d4f2"/><rect x="1" y="13" width="22" height="10" fill="#375a7f"/><path d="M4 17a8 8 0 0 1 16 0" fill="none" stroke="#fff" stroke-width="2.500"/><path d="M7 5l-3 4h6zM18 5l-3 4h6z" fill="#fff"/></symbol>
<symbol id="grass" viewBox="0 0 24 24"><path d="M12 1l9 9-9 12-9-12z" fill="#eee" stroke="#666"/><path d="M7 10l4 5 7-9" fill="none" stroke="#3ba03b" stroke-width="3"/></symbol>
<symbol id="closeb" viewBox="0 0 11 11"><rect x=".5" y=".5" width="10" height="10" rx="2" fill="#eee" stroke="#666"/><path d="M3 3l5 5M8 3L3 8" stroke="#333" stroke-width="1.800"/></symbol>
<symbol id="floatb" viewBox="0 0 11 11"><rect x=".5" y=".5" width="10" height="10" rx="2" fill="#eee" stroke="#666"/><rect x="4" y="2.500" width="4.500" height="4.500" fill="none" stroke="#444"/><rect x="2.500" y="4.500" width="4.500" height="4.500" fill="#eee" stroke="#444"/></symbol>
<symbol id="mini-search" viewBox="0 0 16 16"><circle cx="6.500" cy="6.500" r="5" fill="none" stroke="#777" stroke-width="1.300"/><path d="M10.500 10.500l4.500 4.500" stroke="#777" stroke-width="1.500"/></symbol>
<symbol id="check" viewBox="0 0 11 11"><path d="M2 5l2.500 4.500L9.500 1" fill="none" stroke="#111" stroke-width="1.800"/></symbol>
</defs>
</svg>

<div class="appwin d-flex">
<div class="mainw d-flex flex-column">
  <div class="titlebar d-flex align-items-center">
    <svg class="ic"><use href="#q"/></svg><span>*Untitled Project — QGIS</span>
    <div class="ms-auto d-flex">
      <div class="wctl d-flex align-items-center justify-content-center"><svg viewBox="0 0 12 12"><path d="M1 6.500h10" stroke="#111"/></svg></div>
      <div class="wctl d-flex align-items-center justify-content-center"><svg viewBox="0 0 12 12"><rect x="1" y="3" width="8" height="8" fill="#fff" stroke="#111"/><path d="M3.500 3V1H11v7.500H9" fill="none" stroke="#111"/></svg></div>
      <div class="wctl d-flex align-items-center justify-content-center"><svg viewBox="0 0 12 12"><path d="M1 1l10 10M11 1L1 11" stroke="#111"/></svg></div>
    </div>
  </div>
  <div class="menubar d-flex align-items-center">
    <span class="mi1">Pro<u>j</u>ect</span><span class="mi2"><u>E</u>dit</span><span class="mi3"><u>V</u>iew</span><span class="mi4"><u>L</u>ayer</span><span class="mi5"><u>S</u>ettings</span><span class="mi6"><u>P</u>lugins</span><span class="mi7">Vect<u>o</u>r</span><span class="mi8"><u>R</u>aster</span><span class="mi9"><u>D</u>atabase</span><span class="mi10"><u>W</u>eb</span><span class="mi11"><u>M</u>esh</span><span class="mi12">Pro<u>c</u>essing</span><span><u>H</u>elp</span>
  </div>

  <div class="tb d-flex align-items-center">
    <div class="gr g0 d-flex align-items-center justify-content-center"></div>
    <div class="ti d-flex align-items-center justify-content-center"><svg><use href="#doc"/></svg></div>
    <div class="ti d-flex align-items-center justify-content-center"><svg><use href="#folder"/></svg></div>
    <div class="ti d-flex align-items-center justify-content-center"><svg><use href="#floppy"/></svg></div>
    <div class="ti d-flex align-items-center justify-content-center"><svg><use href="#layout"/></svg></div>
    <div class="ti d-flex align-items-center justify-content-center"><svg><use href="#styled"/></svg></div>
    <div class="ti d-flex align-items-center justify-content-center"><svg><use href="#stylem"/></svg></div>
    <div class="gr d-flex align-items-center justify-content-center"></div>
    <div class="ti d-flex align-items-center justify-content-center"><svg><use href="#hand"/></svg></div>
    <div class="ti d-flex align-items-center justify-content-center"><svg><use href="#pansel"/></svg></div>
    <div class="ti d-flex align-items-center justify-content-center"><svg><use href="#zin"/></svg></div>
    <div class="ti d-flex align-items-center justify-content-center"><svg><use href="#zout"/></svg></div>
    <div class="ti d-flex align-items-center justify-content-center"><svg><use href="#zfull"/></svg></div>
    <div class="ti d-flex align-items-center justify-content-center"><svg><use href="#zsel"/></svg></div>
    <div class="ti d-flex align-items-center justify-content-center"><svg><use href="#zlay"/></svg></div>
    <div class="ti d-flex align-items-center justify-content-center"><svg class="dis"><use href="#z11"/></svg></div>
    <div class="ti d-flex align-items-center justify-content-center"><svg><use href="#zlast"/></svg></div>
    <div class="ti d-flex align-items-center justify-content-center"><svg class="dis"><use href="#znext"/></svg></div>
    <div class="ti d-flex align-items-center justify-content-center"><svg><use href="#nmap"/></svg></div>
    <div class="ti d-flex align-items-center justify-content-center"><svg><use href="#map3d"/></svg></div>
    <div class="ti d-flex align-items-center justify-content-center"><svg><use href="#bm"/></svg></div>
    <div class="ti d-flex align-items-center justify-content-center"><svg><use href="#bms"/></svg></div>
    <div class="ti d-flex align-items-center justify-content-center"><svg><use href="#clock"/></svg></div>
    <div class="ti d-flex align-items-center justify-content-center"><svg><use href="#refr"/></svg></div>
    <div class="gr d-flex align-items-center justify-content-center"></div>
    <div class="ti d-flex align-items-center justify-content-center"><svg><use href="#selr"/></svg></div><div class="da d-flex align-items-center justify-content-center"><i class="tri"></i></div>
    <div class="ti d-flex align-items-center justify-content-center"><svg><use href="#selt"/></svg></div><div class="da d-flex align-items-center justify-content-center"><i class="tri"></i></div>
    <div class="ti d-flex align-items-center justify-content-center"><svg><use href="#dsel"/></svg></div><div class="da d-flex align-items-center justify-content-center"><i class="tri"></i></div>
    <div class="ti d-flex align-items-center justify-content-center"><svg><use href="#selloc"/></svg></div>
    <div class="gr nr d-flex align-items-center justify-content-center"></div>
    <div class="ti d-flex align-items-center justify-content-center"><svg><use href="#ident"/></svg></div>
    <div class="ti d-flex align-items-center justify-content-center"><svg><use href="#abac"/></svg></div>
    <div class="ti on d-flex align-items-center justify-content-center"><svg><use href="#gear"/></svg></div>
    <div class="ti d-flex align-items-center justify-content-center"><svg><use href="#sigma"/></svg></div>
    <div class="ti d-flex align-items-center justify-content-center"><svg><use href="#table"/></svg></div><div class="da d-flex align-items-center justify-content-center"><i class="tri"></i></div>
    <div class="ti d-flex align-items-center justify-content-center"><svg><use href="#ruler"/></svg></div><div class="da d-flex align-items-center justify-content-center"><i class="tri"></i></div>
    <div class="ti d-flex align-items-center justify-content-center"><svg><use href="#balloon"/></svg></div>
    <div class="ti d-flex align-items-center justify-content-center"><svg><use href="#runq"/></svg></div><div class="da d-flex align-items-center justify-content-center"><i class="tri"></i></div>
  </div>

  <div class="tb d-flex align-items-center">
    <div class="gr g0 d-flex align-items-center justify-content-center"></div>
    <div class="ti d-flex align-items-center justify-content-center"><svg><use href="#dsm"/></svg></div>
    <div class="ti d-flex align-items-center justify-content-center"><svg><use href="#gpkg"/></svg></div>
    <div class="ti d-flex align-items-center justify-content-center"><svg><use href="#nshp"/></svg></div>
    <div class="ti d-flex align-items-center justify-content-center"><svg><use href="#feather"/></svg></div>
    <div class="ti d-flex align-items-center justify-content-center"><svg><use href="#mem"/></svg></div>
    <div class="ti d-flex align-items-center justify-content-center"><svg><use href="#vlay"/></svg></div>
    <div class="sp d-flex justify-content-center"></div>
    <div class="ti d-flex align-items-center justify-content-center"><svg><use href="#vbox"/></svg></div>
    <div class="sp d-flex justify-content-center"></div>
    <div class="gr d-flex align-items-center justify-content-center"></div>
    <div class="ti d-flex align-items-center justify-content-center"><svg class="dis"><use href="#pens"/></svg><i class="tri mini"></i></div>
    <div class="ti d-flex align-items-center justify-content-center"><svg><use href="#pen"/></svg></div>
    <div class="ti d-flex align-items-center justify-content-center"><svg class="dis"><use href="#saveed"/></svg></div>
    <div class="ti d-flex align-items-center justify-content-center"><svg class="dis"><use href="#addp"/></svg></div>
    <div class="ti d-flex align-items-center justify-content-center"><svg class="dis"><use href="#digi"/></svg></div><div class="da d-flex align-items-center justify-content-center"><i class="tri dis"></i></div>
    <div class="ti d-flex align-items-center justify-content-center"><svg class="dis"><use href="#edtb"/></svg></div>
    <div class="ti d-flex align-items-center justify-content-center"><svg class="dis"><use href="#trash"/></svg></div>
    <div class="ti d-flex align-items-center justify-content-center"><svg class="dis"><use href="#sciss"/></svg></div>
    <div class="ti d-flex align-items-center justify-content-center"><svg class="dis"><use href="#copy"/></svg></div>
    <div class="ti d-flex align-items-center justify-content-center"><svg class="dis"><use href="#paste"/></svg></div>
    <div class="ti d-flex align-items-center justify-content-center"><svg class="dis"><use href="#undo"/></svg></div>
    <div class="ti d-flex align-items-center justify-content-center"><svg class="dis"><use href="#redo"/></svg></div>
    <div class="gr d-flex align-items-center justify-content-center"></div>
    <div class="ti d-flex align-items-center justify-content-center"><svg><use href="#lab"/></svg></div>
    <div class="ti d-flex align-items-center justify-content-center"><svg><use href="#pie"/></svg></div>
    <div class="sp d-flex justify-content-center"></div>
    <div class="ti d-flex align-items-center justify-content-center"><svg><use href="#labpin"/></svg></div>
    <div class="ti d-flex align-items-center justify-content-center"><svg><use href="#labred"/></svg></div>
    <div class="sp wd d-flex justify-content-center"></div>
    <div class="ti d-flex align-items-center justify-content-center"><svg class="dis"><use href="#lab1"/></svg></div>
    <div class="ti d-flex align-items-center justify-content-center"><svg class="dis"><use href="#lab2"/></svg></div>
    <div class="ti d-flex align-items-center justify-content-center"><svg class="dis"><use href="#lab3"/></svg></div>
    <div class="ti d-flex align-items-center justify-content-center"><svg class="dis"><use href="#lab4"/></svg></div>
    <div class="ti d-flex align-items-center justify-content-center"><svg class="dis"><use href="#lab5"/></svg></div>
    <div class="gr nr d-flex align-items-center justify-content-center"></div>
    <div class="ti d-flex align-items-center justify-content-center"><svg><use href="#gbin"/></svg></div>
    <div class="gr d-flex align-items-center justify-content-center"></div>
    <div class="ti d-flex align-items-center justify-content-center"><svg><use href="#py"/></svg></div>
    <div class="gr d-flex align-items-center justify-content-center"></div>
    <div class="ti d-flex align-items-center justify-content-center"><svg><use href="#help"/></svg></div>
    <div class="gr d-flex align-items-center justify-content-center"></div>
  </div>

  <div class="tb tb3 d-flex align-items-center">
    <div class="gr g0 d-flex align-items-center justify-content-center"></div>
    <div class="ti d-flex align-items-center justify-content-center"><svg><use href="#bgt"/></svg></div>
    <div class="gr d-flex align-items-center justify-content-center"></div>
    <div class="ti d-flex align-items-center justify-content-center"><svg><use href="#pinel"/></svg></div>
    <div class="ti d-flex align-items-center justify-content-center"><svg><use href="#pine"/></svg></div>
    <div class="gr d-flex align-items-center justify-content-center"></div>
    <div class="ti d-flex align-items-center justify-content-center"><svg><use href="#gsearch"/></svg></div>
    <div class="ti d-flex align-items-center justify-content-center"><svg><use href="#mapb"/></svg></div>
  </div>

  <div class="body-row d-flex">
    <!-- left docks -->
    <div class="dockl d-flex flex-column flex-none">
      <div class="docktitle d-flex align-items-center justify-content-between"><span>Browser</span><div class="dockbtns d-flex"><svg><use href="#floatb"/></svg><svg><use href="#closeb"/></svg></div></div>
      <div class="pbar d-flex align-items-center">
        <div class="pi d-flex align-items-center justify-content-center"><svg><use href="#nrect"/></svg></div>
        <div class="pi d-flex align-items-center justify-content-center"><svg><use href="#refr"/></svg></div>
        <div class="pi d-flex align-items-center justify-content-center"><svg><use href="#filt"/></svg></div>
        <div class="pi d-flex align-items-center justify-content-center"><svg><use href="#coll"/></svg></div>
        <div class="pi d-flex align-items-center justify-content-center"><svg><use href="#info"/></svg></div>
      </div>
      <div class="treebox tb-browser d-flex">
        <div class="tlist flex-grow-1 d-flex flex-column">
          <div class="trow l0 d-flex align-items-center"><span class="arrw"></span><svg class="ticon"><use href="#pg"/></svg>PostGIS</div>
          <div class="trow l0 d-flex align-items-center"><span class="arrw"></span><svg class="ticon"><use href="#hana"/></svg>SAP HANA</div>
          <div class="trow l0 d-flex align-items-center"><span class="arrw"></span><svg class="ticon"><use href="#mss"/></svg>MSSQL</div>
          <div class="trow l0 d-flex align-items-center"><span class="arrw"></span><svg class="ticon"><use href="#ora"/></svg>Oracle</div>
          <div class="trow l0 d-flex align-items-center"><span class="arrw"><i class="ae"></i></span><svg class="ticon"><use href="#globe"/></svg>WMS/WMTS</div>
          <div class="trow l1 d-flex align-items-center"><span class="arrw"><i class="ac"></i></span><svg class="ticon"><use href="#wms"/></svg>Beschermde gebieden</div>
          <div class="trow l1 d-flex align-items-center"><span class="arrw"><i class="ae"></i></span><svg class="ticon"><use href="#wms"/></svg>Wegen</div>
          <div class="trow l2 d-flex align-items-center"><span class="arrw"><i class="ae"></i></span><svg class="ticon"><use href="#globe"/></svg>grijs</div>
          <div class="trow l3 d-flex align-items-center"><span class="arrw"></span><svg class="ticon"><use href="#rast"/></svg>EPSG:25831</div>
          <div class="trow l3 d-flex align-items-center"><span class="arrw"></span><svg class="ticon"><use href="#rast"/></svg>EPSG:28992</div>
          <div class="trow l3 sel1 d-flex align-items-center"><span class="arrw"></span><svg class="ticon"><use href="#rast2"/></svg>EPSG:3857</div>
          <div class="trow l2 d-flex align-items-center"><span class="arrw"><i class="ac"></i></span><svg class="ticon"><use href="#globe"/></svg>pastel</div>
          <div class="trow l2 d-flex align-items-center"><span class="arrw"><i class="ac"></i></span><svg class="ticon"><use href="#globe"/></svg>standaard</div>
        </div>
        <div class="sbar d-flex flex-column">
          <div class="sbbtn d-flex align-items-center justify-content-center"><i class="tri uptri"></i></div>
          <div class="sgrey h45"></div><div class="h92"></div><div class="sgrey flex-grow-1"></div>
          <div class="sbbtn d-flex align-items-center justify-content-center"><i class="tri"></i></div>
        </div>
      </div>
      <div class="split d-flex justify-content-center align-items-center"></div>
      <div class="docktitle d-flex align-items-center justify-content-between"><span>Layers</span><div class="dockbtns d-flex"><svg><use href="#floatb"/></svg><svg><use href="#closeb"/></svg></div></div>
      <div class="pbar d-flex align-items-center">
        <div class="pi d-flex align-items-center justify-content-center"><svg><use href="#brush"/></svg></div>
        <div class="pi d-flex align-items-center justify-content-center"><svg><use href="#addg"/></svg></div>
        <div class="pi d-flex align-items-center justify-content-center"><svg><use href="#eye"/></svg></div>
        <div class="pi d-flex align-items-center justify-content-center"><svg><use href="#filt"/></svg></div>
        <div class="pi d-flex align-items-center justify-content-center"><svg><use href="#eps"/></svg></div>
        <div class="pda d-flex align-items-center justify-content-center"><i class="tri"></i></div>
        <div class="pi d-flex align-items-center justify-content-center"><svg><use href="#expd"/></svg></div>
        <div class="pi d-flex align-items-center justify-content-center"><svg><use href="#coll"/></svg></div>
        <div class="pi d-flex align-items-center justify-content-center"><svg><use href="#rml"/></svg></div>
      </div>
      <div class="treebox tb-layers tl flex-grow-1">
        <div class="trow sel2 d-flex align-items-center"><span class="arrw"></span><span class="cbx"><svg><use href="#check"/></svg></span><span class="lic swatch"></span><span class="lyr-on">landuse_military_'t Harde</span><span class="ind ms-auto"><svg><use href="#chip"/></svg></span></div>
        <div class="trow d-flex align-items-center"><span class="arrw"></span><span class="cbx"></span><svg class="lic" viewBox="0 0 16 16"><circle cx="8" cy="8" r="3.500" fill="#d0603a"/></svg><span class="lyr-off">landuse_military_'t Harde</span><span class="ind ms-auto"><svg><use href="#chip"/></svg></span></div>
        <div class="trow d-flex align-items-center"><span class="arrw"><i class="ac"></i></span><span class="cbx"></span><svg class="lic"><use href="#rast"/></svg><span class="lyr-off">grijs</span></div>
      </div>
    </div>
    <div class="gutter"></div>

    <!-- map -->
    <div class="mapcol d-flex flex-column flex-none">
      <div class="msgbar d-flex align-items-center">
        <svg class="bub" viewBox="0 0 24 24"><path d="M3 3h18a2 2 0 0 1 2 2v10a2 2 0 0 1-2 2H11l-3 4-1-4H3a2 2 0 0 1-2-2V5a2 2 0 0 1 2-2z" fill="#f6fbff" stroke="#999"/></svg>
        <b>Add feature:</b><span>No active vector layer</span>
        <span class="msgmore">2 more</span>
        <svg class="msgx" viewBox="0 0 18 18"><circle cx="9" cy="9" r="8.500" fill="#333"/><path d="M5.500 5.500l7 7M12.500 5.500l-7 7" stroke="#fff" stroke-width="2.400"/></svg>
        <i class="tri"></i>
      </div>
      <div class="canvas">
        <div class="maprect">
          <svg class="mapshape" viewBox="0 0 840 630">
            <g fill="#f0a740" stroke="#666" stroke-width="3" stroke-linejoin="round">
              <path d="M665 50L735 130 757 180 770 187 772 238 662 272 630 295 595 305 540 348 533 380 397 453 385 425 397 430 437 408 418 385 410 360 397 367 385 348 365 348 358 370 345 345 337 337 368 313 343 270 408 215 413 205 460 175z"/>
              <path d="M343 270L368 313 337 337 325 310 320 290z"/>
              <path d="M365 348L385 348 397 367 410 360 418 385 437 408 397 430 372 385 358 370z"/>
              <path d="M300 298L313 320 325 320 385 428 255 598 235 580 225 577 213 588 100 452z"/>
            </g>
            <path d="M370 385l14 20-6 16-10-22z" fill="#fff"/>
          </svg>
        </div>
      </div>
    </div>
    <div class="gutter"></div>

    <!-- right docks -->
    <div class="dockr d-flex flex-column flex-none">
      <div class="docktitle d-flex align-items-center justify-content-between"><span>Processing Toolbox</span><div class="dockbtns d-flex"><svg><use href="#floatb"/></svg><svg><use href="#closeb"/></svg></div></div>
      <div class="pbar d-flex align-items-center">
        <div class="pi d-flex align-items-center justify-content-center"><svg><use href="#rgears"/></svg></div>
        <div class="pi d-flex align-items-center justify-content-center"><svg><use href="#py"/></svg></div>
        <div class="pi d-flex align-items-center justify-content-center"><svg><use href="#clock"/></svg></div>
        <div class="pi d-flex align-items-center justify-content-center"><svg><use href="#doc"/></svg></div>
        <div class="ps"></div>
        <div class="pi d-flex align-items-center justify-content-center"><svg><use href="#penY"/></svg></div>
        <div class="ps"></div>
        <div class="pi d-flex align-items-center justify-content-center"><svg><use href="#wrench"/></svg></div>
      </div>
      <div class="searchbox d-flex align-items-center"><svg><use href="#mini-search"/></svg>Search...</div>
      <div class="treebox tb-proc tp d-flex">
        <div class="tlist flex-grow-1 d-flex flex-column">
          <div class="trow p0 d-flex align-items-center"><span class="arrw"><i class="ae"></i></span><svg class="ticon"><use href="#clock"/></svg>Recently used</div>
          <div class="trow p1 d-flex align-items-center"><span class="arrw"></span><svg class="ticon"><use href="#rzr"/></svg>Rasterize (vector to raster)</div>
          <div class="trow p1 sel2 d-flex align-items-center"><span class="arrw"></span><svg class="ticon"><use href="#gear"/></svg>Convert map to raster</div>
          <div class="trow p1 d-flex align-items-center"><span class="arrw"></span><svg class="ticon"><use href="#prox"/></svg>Proximity (raster distance)</div>
          <div class="trow p1 d-flex align-items-center"><span class="arrw"></span><svg class="ticon"><use href="#sieve"/></svg>Sieve</div>
          <div class="trow p1 d-flex align-items-center"><span class="arrw"></span><svg class="ticon"><use href="#grass"/></svg>r.grow.distance</div>
          <div class="trow p0 d-flex align-items-center"><span class="arrw"><i class="ac"></i></span><svg class="ticon"><use href="#q"/></svg>Cartography</div>
          <div class="trow p0 d-flex align-items-center"><span class="arrw"><i class="ac"></i></span><svg class="ticon"><use href="#q"/></svg>Database</div>
          <div class="trow p0 d-flex align-items-center"><span class="arrw"><i class="ac"></i></span><svg class="ticon"><use href="#q"/></svg>File tools</div>
          <div class="trow p0 d-flex align-items-center"><span class="arrw"><i class="ac"></i></span><svg class="ticon"><use href="#q"/></svg>GPS</div>
          <div class="trow p0 d-flex align-items-center"><span class="arrw"><i class="ac"></i></span><svg class="ticon"><use href="#q"/></svg>Interpolation</div>
          <div class="trow p0 d-flex align-items-center"><span class="arrw"><i class="ac"></i></span><svg class="ticon"><use href="#q"/></svg>Layer tools</div>
          <div class="trow p0 d-flex align-items-center"><span class="arrw"><i class="ac"></i></span><svg class="ticon"><use href="#q"/></svg>Mesh</div>
          <div class="trow p0 d-flex align-items-center"><span class="arrw"><i class="ac"></i></span><svg class="ticon"><use href="#q"/></svg>Network analysis</div>
          <div class="trow p0 d-flex align-items-center"><span class="arrw"><i class="ac"></i></span><svg class="ticon"><use href="#q"/></svg>Plots</div>
          <div class="trow p0 d-flex align-items-center"><span class="arrw"><i class="ac"></i></span><svg class="ticon"><use href="#q"/></svg>Raster analysis</div>
          <div class="trow p0 d-flex align-items-center"><span class="arrw"><i class="ac"></i></span><svg class="ticon"><use href="#q"/></svg>Raster creation</div>
        </div>
        <div class="sbar d-flex flex-column">
          <div class="sbbtn d-flex align-items-center justify-content-center"><i class="tri uptri"></i></div>
          <div class="h142"></div><div class="sgrey flex-grow-1"></div>
          <div class="sbbtn d-flex align-items-center justify-content-center"><i class="tri"></i></div>
        </div>
      </div>
      <div class="split d-flex justify-content-center align-items-center"></div>
      <div class="docktitle d-flex align-items-center justify-content-between"><span>Identify Results</span><div class="dockbtns d-flex"><svg><use href="#floatb"/></svg><svg><use href="#closeb"/></svg></div></div>
      <div class="pbar pbar2 d-flex align-items-center">
        <div class="pi d-flex align-items-center justify-content-center"><svg class="dis"><use href="#coll"/></svg></div>
        <div class="ps"></div>
        <div class="pi d-flex align-items-center justify-content-center"><svg><use href="#expd"/></svg></div>
        <div class="pi d-flex align-items-center justify-content-center"><svg><use href="#coll"/></svg></div>
        <div class="pi d-flex align-items-center justify-content-center"><svg><use href="#exps"/></svg></div>
        <div class="ps"></div>
        <div class="pi d-flex align-items-center justify-content-center"><svg><use href="#dsel"/></svg></div>
        <div class="ps"></div>
        <div class="pi d-flex align-items-center justify-content-center"><svg class="dis"><use href="#copy"/></svg></div>
        <div class="pi d-flex align-items-center justify-content-center"><svg class="dis"><use href="#paste"/></svg></div>
        <div class="ps"></div>
        <div class="pi d-flex align-items-center justify-content-center"><svg><use href="#selr"/></svg></div>
        <div class="pda d-flex align-items-center justify-content-center"><i class="tri"></i></div>
        <div class="pi d-flex align-items-center justify-content-center"><svg><use href="#wrench"/></svg></div>
        <div class="ps"></div>
        <div class="pi d-flex align-items-center justify-content-center"><svg><use href="#help"/></svg></div>
      </div>
      <div class="idtab d-flex flex-column">
        <div class="idhead d-flex align-items-center"><div class="idh1 d-flex align-items-center">Feature</div><div class="idh2">Value</div></div>
      </div>
      <div class="formrow d-flex align-items-center"><span class="fl mt-2">Mode</span><div class="combo c-mode d-flex align-items-center justify-content-between"><span>Current Layer</span><i class="tri"></i></div></div>
      <div class="formrow d-flex align-items-center"><span class="fl mt-2">View</span><div class="combo c-view d-flex align-items-center justify-content-between"><span>Tree</span><i class="tri"></i></div></div>
    </div>
  </div>

  <div class="statusb d-flex align-items-start">
    <div class="loc"></div>
    <div class="popup d-flex align-items-center"><svg class="q"><use href="#q"/></svg><span>Convert Map ...</span><svg class="x" viewBox="0 0 11 11"><path d="M.5.5l10 10M10.500.5l-10 10" stroke="#666"/></svg></div>
    <span class="slb lab-coord">Coordinate</span>
    <input class="form-control sinput w96 g4" value="679918,6853118">
    <svg class="st-ico g4" viewBox="0 0 16 16"><path d="M3 2l10 12M8 1l5 6-3 7-6-6z" fill="#aaa" stroke="#333"/></svg>
    <span class="slb lab-scale">Scale</span>
    <div class="sgroup w83 d-flex align-items-center g4"><span class="val flex-grow-1">1:335154</span><div class="scap d-flex align-items-center justify-content-center"><i class="tri"></i></div></div>
    <svg class="st-ico lock g11" viewBox="0 0 14 16"><path d="M3.500 7V5a3.500 3.500 0 0 1 7 0v2" fill="none" stroke="#777" stroke-width="1.500"/><rect x="1.500" y="7" width="11" height="8.500" rx="1" fill="#666"/></svg>
    <span class="slb lab-mag">Magnifier</span>
    <div class="sgroup w86 d-flex align-items-center g4"><span class="val flex-grow-1">100%</span><div class="scap d-flex flex-column align-items-center justify-content-center"><i class="tri uptri"></i><i class="tri"></i></div></div>
    <span class="slb lab-rot">Rotation</span>
    <div class="sgroup w83 d-flex align-items-center g9"><span class="val flex-grow-1">0.0 °</span><div class="scap d-flex flex-column align-items-center justify-content-center"><i class="tri uptri"></i><i class="tri"></i></div></div>
    <span class="cbx st g7"><svg><use href="#check"/></svg></span>
    <span class="slb lab-ren">Render</span>
    <svg class="st-ico g15" viewBox="0 0 24 24"><use href="#globe"/></svg>
    <span class="slb lab-eps">EPSG:3857</span>
    <svg class="st-ico g22" viewBox="0 0 16 16"><path d="M8 1a7 7 0 0 1 0 13l-3 2v-3A7 7 0 0 1 8 1z" fill="#666"/><circle cx="5" cy="7.500" r="1" fill="#fff"/><circle cx="8" cy="7.500" r="1" fill="#fff"/><circle cx="11" cy="7.500" r="1" fill="#fff"/></svg>
  </div>
</div>
<div class="edgebar d-flex flex-column"><div class="edge-top"></div><div class="edge-thumb"></div></div>
</div>
<div class="taskb d-flex">
  <div class="task-glow"></div>
  <div class="task-grad"></div>
  <div class="task-time">15:29</div>
</div>
</body>
</html>
